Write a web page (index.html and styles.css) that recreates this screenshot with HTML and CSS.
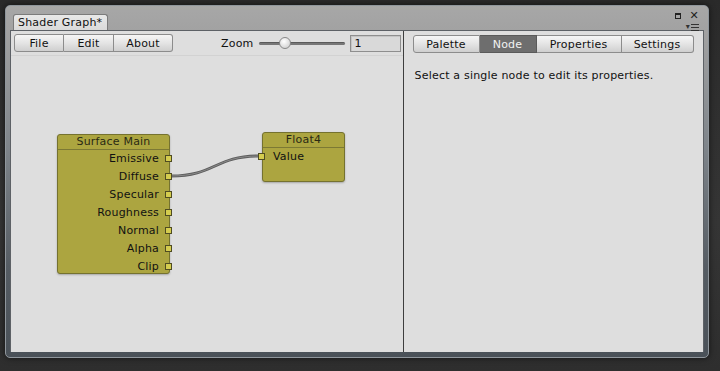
FILE: index.html
```html
<!DOCTYPE html>
<html lang="en">
<head>
    <meta charset="UTF-8">
    <title>Shader Graph</title>
    <link rel="stylesheet" href="styles.css">
</head>
<body>
    <div class="window">
        <div class="titlebar">
            <div class="tab">Shader Graph*</div>
            <div class="win-icons">
                <div class="win-top">
                    <span class="max-icon"></span>
                    <span class="close-icon">✕</span>
                </div>
                <div class="menu-icon"><span class="tri">▾</span><span class="bars"></span></div>
            </div>
        </div>

        <div class="content">
            <div class="left-panel">
                <div class="toolbar">
                    <div class="btn-group">
                        <button class="btn btn-file">File</button>
                        <button class="btn btn-edit">Edit</button>
                        <button class="btn btn-about">About</button>
                    </div>
                    <span class="zoom-label">Zoom</span>
                    <div class="slider">
                        <div class="track"></div>
                        <div class="thumb"></div>
                    </div>
                    <div class="zoom-field">1</div>
                </div>

                <div class="canvas">
                    <svg class="links" width="393" height="298">
                        <path d="M160 120 C 204 120, 204 100, 248 100" fill="none" stroke="#5e5e5e" stroke-width="3"/>
                        <path d="M160 120 C 204 120, 204 100, 248 100" fill="none" stroke="#8a8a8a" stroke-width="1"/>
                    </svg>

                    <div class="node node-surface">
                        <div class="node-title">Surface Main</div>
                        <div class="slot out">Emissive<span class="port"></span></div>
                        <div class="slot out">Diffuse<span class="port"></span></div>
                        <div class="slot out">Specular<span class="port"></span></div>
                        <div class="slot out">Roughness<span class="port"></span></div>
                        <div class="slot out">Normal<span class="port"></span></div>
                        <div class="slot out">Alpha<span class="port"></span></div>
                        <div class="slot out">Clip<span class="port"></span></div>
                    </div>

                    <div class="node node-float">
                        <div class="node-title">Float4</div>
                        <div class="slot in"><span class="port"></span>Value</div>
                    </div>
                </div>
            </div>

            <div class="right-panel">
                <div class="tabs">
                    <button class="tab-btn t-palette">Palette</button>
                    <button class="tab-btn t-node active">Node</button>
                    <button class="tab-btn t-props">Properties</button>
                    <button class="tab-btn t-settings">Settings</button>
                </div>
                <p class="hint">Select a single node to edit its properties.</p>
            </div>
        </div>
    </div>
</body>
</html>
```

FILE: styles.css
```css
* {
    margin: 0;
    padding: 0;
    box-sizing: border-box;
}

body {
    width: 720px;
    height: 371px;
    padding: 5px;
    background: linear-gradient(180deg, #2a2a2a 0%, #353535 60%, #2e2e2e 100%);
    font-family: "DejaVu Sans", Verdana, sans-serif;
    font-size: 11px;
    letter-spacing: 0.2px;
    color: #1a1a1a;
    overflow: hidden;
}

.window {
    width: 704px;
    height: 353px;
    border: 1px solid #8f969c;
    border-radius: 5px;
    background: linear-gradient(180deg, #a7a7a7 0px, #a2a2a2 24px, #7f858b 40%, #555c63 75%, #4a5158 100%);
    display: flex;
    flex-direction: column;
    padding: 0 4px 5px 4px;
    box-shadow: 0 0 6px rgba(0, 0, 0, 0.6);
}

.titlebar {
    height: 24px;
    display: flex;
    align-items: flex-end;
    position: relative;
}

.tab {
    margin-left: 3px;
    width: 95px;
    height: 16px;
    background: linear-gradient(180deg, #e8e8e8, #dadada);
    border: 1px solid #7b7b7b;
    border-bottom: none;
    border-radius: 3px 3px 0 0;
    padding-left: 4px;
    line-height: 15px;
    color: #111;
}

.win-icons {
    margin-left: auto;
    width: 30px;
    height: 24px;
    display: flex;
    flex-direction: column;
    align-items: flex-end;
    padding-top: 4px;
    margin-right: 5px;
}

.win-top {
    display: flex;
    align-items: center;
    gap: 9px;
    height: 11px;
}

.max-icon {
    width: 6px;
    height: 6px;
    border: 1px solid #222;
    border-top-width: 2px;
}

.close-icon {
    font-size: 11px;
    line-height: 11px;
    color: #222;
}

.menu-icon {
    display: flex;
    align-items: center;
    gap: 1px;
    height: 8px;
    margin-top: 2px;
}

.menu-icon .tri {
    font-size: 8px;
    line-height: 8px;
    color: #333;
}

.menu-icon .bars {
    width: 8px;
    height: 7px;
    border-top: 1px solid #333;
    border-bottom: 1px solid #333;
    background: linear-gradient(#333, #333) center / 100% 1px no-repeat;
}

.content {
    flex: 1;
    display: flex;
    background: #dedede;
    border: 1px solid #5d6166;
    border-bottom: none;
}

.left-panel {
    width: 393px;
    display: flex;
    flex-direction: column;
    border-right: 1px solid #3e3e3e;
}

.toolbar {
    height: 25px;
    display: flex;
    align-items: center;
    padding: 0 2px 0 3px;
    border-bottom: 1px solid #d2d2d2;
}

.btn-group {
    display: flex;
}

.btn {
    height: 18px;
    font-family: inherit;
    font-size: 11px;
    letter-spacing: 0.2px;
    color: #111;
    background: linear-gradient(180deg, #f6f6f6 0%, #e4e4e4 50%, #cfcfcf 100%);
    border: 1px solid #8c8c8c;
    border-left: none;
}

.btn-file {
    width: 50px;
    border-left: 1px solid #8c8c8c;
    border-radius: 3px 0 0 3px;
}

.btn-edit {
    width: 50px;
}

.btn-about {
    width: 59px;
    border-radius: 0 3px 3px 0;
}

.zoom-label {
    margin-left: 48px;
    color: #111;
}

.slider {
    position: relative;
    width: 86px;
    height: 14px;
    margin-left: 5px;
    display: flex;
    align-items: center;
}

.track {
    width: 100%;
    height: 3px;
    border-radius: 2px;
    background: #777;
    border-top: 1px solid #5a5a5a;
}

.thumb {
    position: absolute;
    left: 20px;
    top: 1px;
    width: 12px;
    height: 12px;
    border-radius: 50%;
    background: radial-gradient(circle at 40% 35%, #ffffff, #d8d8d8 70%);
    border: 1px solid #888;
}

.zoom-field {
    margin-left: 5px;
    width: 51px;
    height: 17px;
    background: #d9d9d9;
    border: 1px solid #8e8e8e;
    box-shadow: inset 1px 1px 0 #c4c4c4;
    padding-left: 4px;
    line-height: 15px;
    color: #111;
}

.canvas {
    flex: 1;
    position: relative;
}

.links {
    position: absolute;
    left: 0;
    top: 0;
}

.node {
    position: absolute;
    background: #aca540;
    border: 1px solid #75722f;
    border-radius: 3px;
    box-shadow: 0 1px 2px rgba(0, 0, 0, 0.25);
}

.node-surface {
    left: 46px;
    top: 78px;
    width: 113px;
    height: 140px;
}

.node-float {
    left: 251px;
    top: 76px;
    width: 83px;
    height: 50px;
}

.node-title {
    height: 15px;
    line-height: 14px;
    text-align: center;
    color: #2a2a14;
    border-bottom: 1px solid #7c7934;
}

.slot {
    position: relative;
    height: 18px;
    line-height: 18px;
    color: #111;
}

.slot.out {
    text-align: right;
    padding-right: 10px;
}

.slot.in {
    padding-left: 10px;
}

.port {
    position: absolute;
    top: 5px;
    width: 7px;
    height: 7px;
    background: #d4cc4e;
    border: 1px solid #4f4c22;
}

.slot.out .port {
    right: -3px;
}

.slot.in .port {
    left: -5px;
}

.right-panel {
    flex: 1;
    display: flex;
    flex-direction: column;
    padding: 4px 10px 0 9px;
}

.tabs {
    display: flex;
    height: 18px;
}

.tab-btn {
    font-family: inherit;
    font-size: 11px;
    letter-spacing: 0.2px;
    color: #111;
    background: linear-gradient(180deg, #f6f6f6 0%, #e4e4e4 50%, #cfcfcf 100%);
    border: 1px solid #8c8c8c;
    border-left: none;
}

.t-palette {
    width: 67px;
    border-left: 1px solid #8c8c8c;
    border-radius: 3px 0 0 3px;
}

.t-node {
    width: 57px;
}

.t-props {
    width: 85px;
}

.t-settings {
    width: 72px;
    border-radius: 0 3px 3px 0;
}

.tab-btn.active {
    background: #6e6e6e;
    border-color: #5a5a5a;
    color: #f2f2f2;
}

.hint {
    margin-top: 16px;
    margin-left: 2px;
    color: #111;
}
```
